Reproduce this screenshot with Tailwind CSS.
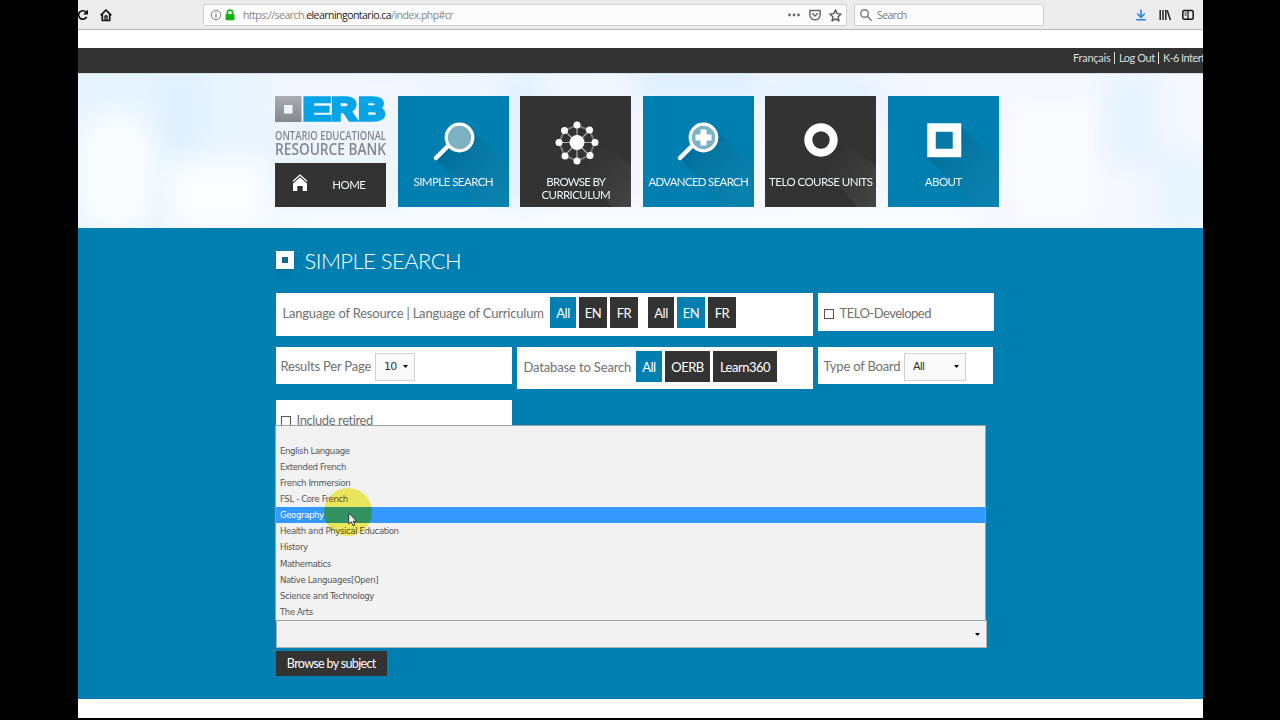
<!DOCTYPE html>
<html lang="en">
<head>
    <meta charset="UTF-8">
    <meta name="viewport" content="width=device-width, initial-scale=1.0">
    <title>Ontario Educational Resource Bank</title>
    <script src="https://cdn.jsdelivr.net/npm/@tailwindcss/browser@4"></script>
</head>
<body class="bg-black h-screen overflow-hidden">
    <div class="relative ml-[78px] w-[1125px] h-[718px] bg-white overflow-hidden whitespace-nowrap font-['Lato',sans-serif] flex flex-col">
        <!-- Browser toolbar -->
        <div class="h-[30px] shrink-0 bg-[#ececec] border-b border-[#b5b9b3] flex items-start pt-1 font-['Open_Sans',sans-serif] text-[10.5px]">
            <svg class="w-3 h-[22px] shrink-0" viewBox="0 0 12 22" fill="none" stroke="#111" stroke-width="1.7">
                <path d="M8 8.200A4.200 4.200 0 1 0 8.600 12.800"></path>
                <path d="M10 5.500v5H5z" fill="#111" stroke="none"></path>
            </svg>
            <svg class="w-3 h-[22px] ml-[10px] shrink-0" viewBox="0 0 12 22" fill="none" stroke="#111" stroke-width="1.7" stroke-linejoin="round">
                <path d="M.7 11.3L6 6l5.3 5.3M2.3 10.5v6h7.4v-6"></path>
                <path d="M5 16v-4h2v4" stroke-width="1.3"></path>
            </svg>
            <div class="ml-[91px] w-[644px] h-[22px] shrink-0 bg-[#fcfcfc] border border-[#cfcfcf] rounded-xs flex items-center text-[#858585]">
                <svg class="w-3 h-3 ml-[6px]" viewBox="0 0 12 12" fill="none" stroke="#777">
                    <circle cx="6" cy="6" r="4.7"></circle>
                    <path d="M6 5.2v3.6M6 3v1.2" stroke-width="1.2"></path>
                </svg>
                <svg class="w-[10px] h-3 ml-[3px]" viewBox="0 0 10 12">
                    <path d="M2.4 6V3.6a2.6 2.6 0 0 1 5.2 0V6" fill="none" stroke="#12b312" stroke-width="1.7"></path>
                    <rect x=".5" y="5" width="9" height="6.3" rx=".8" fill="#12b312"></rect>
                </svg>
                <span class="ml-[8px] mt-px tracking-[-0.53px]">https://search.<span class="text-[#222]">elearningontario.ca</span>/index.php#cr</span>
                <svg class="w-3 h-3 ml-auto" viewBox="0 0 12 12" fill="#666">
                    <circle cx="1.5" cy="6" r="1.4"></circle><circle cx="6" cy="6" r="1.4"></circle><circle cx="10.500" cy="6" r="1.4"></circle>
                </svg>
                <svg class="w-3 h-3 ml-[9px]" viewBox="0 0 12 12" fill="none" stroke="#666" stroke-width="1.4" stroke-linejoin="round" stroke-linecap="round">
                    <path d="M.8 1.5h10.4V6A5.2 4.8 0 0 1 .8 6zM3.5 4.6L6 7l2.5-2.4"></path>
                </svg>
                <svg class="w-[13px] h-[13px] ml-2 mr-[4px]" viewBox="0 0 12 12" fill="none" stroke="#555" stroke-width="1.3" stroke-linejoin="round">
                    <path d="M6 .9l1.5 3.4 3.7.4-2.8 2.5.8 3.8L6 9.1 2.8 11l.8-3.8L.8 4.7l3.7-.4z"></path>
                </svg>
            </div>
            <div class="ml-[7px] w-[190px] h-[22px] shrink-0 bg-[#fcfcfc] border border-[#cfcfcf] rounded-xs flex items-center text-[#777]">
                <svg class="w-3 h-3 ml-[5px]" viewBox="0 0 12 12" fill="none" stroke="#777" stroke-width="1.4">
                    <circle cx="4.5" cy="4.5" r="3.8"></circle><path d="M7.3 7.3L11.600 11.600"></path>
                </svg>
                <span class="ml-[5px] mt-px tracking-[-0.6px]">Search</span>
            </div>
            <svg class="w-3 h-[22px] ml-[91px] shrink-0" viewBox="0 0 12 22" fill="none" stroke="#2484dd" stroke-width="1.6">
                <path d="M6 5.500v7.500M2.200 9.500L6 13.300l3.800-3.800M1.200 15.700h9.600"></path>
            </svg>
            <svg class="w-3 h-[22px] ml-3 shrink-0" viewBox="0 0 12 22" fill="none" stroke="#222" stroke-width="1.500">
                <path d="M1.200 6v10M4 6v10M6.800 6v10M8.200 6.300L11.400 16"></path>
            </svg>
            <svg class="w-3 h-[22px] ml-[11px] shrink-0" viewBox="0 0 12 22" fill="none" stroke="#111" stroke-width="1.500">
                <rect x=".8" y="6.500" width="10.400" height="8.800" rx="1.600"></rect>
                <path d="M6 6.500v9" stroke-width="1.200"></path><path d="M2.600 9h2M2.600 11h2" stroke-width="1"></path>
            </svg>
        </div>

        <!-- Top links -->
        <div class="mt-[18px] h-[25px] shrink-0 bg-[#333] flex items-start pt-[2px] pl-[995px] text-[11px] leading-4 text-[#ddd]">
            <span class="w-[37px] shrink-0 tracking-[-0.25px]">Français</span>
            <span class="w-px h-3 shrink-0 bg-[#c5dccb] mx-[4px] mt-[2px]"></span>
            <span class="w-[35px] shrink-0 tracking-[-0.45px]">Log Out</span>
            <span class="w-px h-3 shrink-0 bg-[#efe8cf] mx-[4px] mt-[2px]"></span>
            <span class="tracking-[-0.55px]">K-6 Interface</span>
        </div>

        <!-- Header tiles -->
        <div class="h-[155px] shrink-0 bg-linear-to-r from-[#e6f4fe] via-[#f3f7ff] to-[#f5f8ff] border-t border-[#d5e0e6] relative">
            <svg class="absolute inset-0 w-full h-full" viewBox="0 0 1125 155" preserveAspectRatio="none">
                <defs>
                    <filter id="soft"><feGaussianBlur stdDeviation="13"></feGaussianBlur></filter>
                    <linearGradient id="shade" x1="0" y1="0" x2="1" y2="1"><stop offset=".2" stop-color="#005c85" stop-opacity=".5"></stop><stop offset=".85" stop-color="#2a85a8" stop-opacity=".25"></stop></linearGradient>
                    <linearGradient id="shadeDark" x1="0" y1="0" x2="1" y2="1"><stop offset=".3" stop-color="#333"></stop><stop offset="1" stop-color="#444"></stop></linearGradient>
                </defs>
                <g filter="url(#soft)">
                    <rect x="0" y="40" width="75" height="120" rx="30" fill="#fff" opacity=".8"></rect>
                    <rect x="82" y="0" width="40" height="90" fill="#d9edfe" opacity=".7"></rect>
                    <rect x="90" y="85" width="100" height="75" fill="#fff" opacity=".8"></rect>
                    <rect x="195" y="0" width="150" height="40" fill="#f5f6ff"></rect>
                    <rect x="430" y="0" width="30" height="150" fill="#d8edfe" opacity=".8"></rect>
                    <rect x="560" y="-5" width="120" height="30" fill="#d5eaff" opacity=".8"></rect>
                    <rect x="690" y="0" width="110" height="40" fill="#e4f1fe"></rect>
                    <rect x="200" y="135" width="700" height="30" fill="#fafdff"></rect>
                    <rect x="935" y="30" width="80" height="120" fill="#fff" opacity=".6"></rect>
                    <rect x="1030" y="0" width="50" height="90" fill="#e0f1fe" opacity=".7"></rect>
                    <rect x="1080" y="80" width="50" height="75" fill="#e7f4fe"></rect>
                </g>
            </svg>
            <div class="relative flex gap-[11.5px] pl-[197.3px] pt-[21.6px] text-[11.5px] leading-[13px] tracking-[-0.55px] text-center text-[#eef4f6]">
                <div class="w-[111px] h-[111px] shrink-0">
                    <svg class="w-[111px] h-[67px]" viewBox="0 0 111 67">
                        <defs>
                            <linearGradient id="grey" x1="0" y1="0" x2="0" y2="1"><stop offset="0" stop-color="#abadb5"></stop><stop offset="1" stop-color="#85878f"></stop></linearGradient>
                            <linearGradient id="sky" x1="0" y1="0" x2="0" y2="1"><stop offset="0" stop-color="#00aeef"></stop><stop offset="1" stop-color="#149cdd"></stop></linearGradient>
                        </defs>
                        <path d="M0 0h26.500v26H0zM9 9v8.500h8.500V9z" fill="url(#grey)" fill-rule="evenodd"></path>
                        <g fill="url(#sky)" stroke="#08a5e6" stroke-width="3.600" letter-spacing="0" font-family="Liberation Sans" font-weight="bold" font-size="32">
                            <text x="28" y="24.100" textLength="28" lengthAdjust="spacingAndGlyphs">E</text>
                            <text x="56.500" y="24.100" textLength="25" lengthAdjust="spacingAndGlyphs">R</text>
                            <text x="83.500" y="24.100" textLength="26.500" lengthAdjust="spacingAndGlyphs">B</text>
                        </g>
                        <g fill="#85878c" letter-spacing="0" font-family="Open Sans" font-weight="600">
                            <text x="0" y="43.500" font-size="12.500" textLength="111" lengthAdjust="spacingAndGlyphs">ONTARIO EDUCATIONAL</text>
                            <text x="0" y="58.500" font-size="17" textLength="111" lengthAdjust="spacingAndGlyphs">RESOURCE BANK</text>
                        </g>
                    </svg>
                    <div class="h-[44px] bg-[#333] flex items-center">
                        <svg class="w-4 h-[18px] ml-[17px] mb-[4px]" viewBox="0 0 16 18" fill="#fff">
                            <path d="M1 7.300L8 1l7 6.300" fill="none" stroke="#fff" stroke-width="1.200"></path>
                            <path d="M1 9.500L8 3.300l7 6.200v7.500h-4.300v-5h-5.400v5H1z"></path>
                        </svg>
                        <span class="ml-[24px]">HOME</span>
                    </div>
                </div>
                <div class="w-[111px] h-[111px] shrink-0 bg-[#007fb0]">
                    <svg class="w-[111px] h-[79px] overflow-visible" viewBox="0 0 111 79">
                        <path d="M36 62L72 33l39 37v41H84z" fill="url(#shade)"></path>
                        <path d="M38 62L50 50" stroke="#fff" stroke-width="4.500" stroke-linecap="round"></path>
                        <circle cx="61.500" cy="41.500" r="13.300" fill="#7db2c4" stroke="#fff" stroke-width="3.200"></circle>
                    </svg>
                    <div class="relative">SIMPLE SEARCH</div>
                </div>
                <div class="w-[111px] h-[111px] shrink-0 bg-[#333]">
                    <svg class="w-[111px] h-[79px] overflow-visible" viewBox="0 0 111 79" fill="#fff">
                        <path d="M44 60L78 48l33 20v43H92z" fill="url(#shadeDark)"></path>
                        <g stroke="#aaa" stroke-width="1.200" fill="none">
                            <path d="M57 29v36M39 46.500h36M44.500 34.500l25 25M69.500 34.500l-25 25"></path>
                            <path d="M57 29l12.500 5.500L75 46.500l-5.500 13L57 65l-12.500-5.500-5.500-13 5.500-12z" stroke="#777" stroke-width="2"></path>
                        </g>
                        <circle cx="57" cy="46.500" r="7.500"></circle>
                        <circle cx="57" cy="29" r="3.500"></circle><circle cx="69.500" cy="34" r="3.500"></circle>
                        <circle cx="75" cy="46.500" r="3.500"></circle><circle cx="70" cy="59.500" r="3.500"></circle>
                        <circle cx="57" cy="65" r="3.500"></circle><circle cx="45" cy="60" r="3.500"></circle>
                        <circle cx="39" cy="46.500" r="3.500"></circle><circle cx="44.500" cy="34.500" r="3.500"></circle>
                    </svg>
                    <div class="relative tracking-[-0.75px]">BROWSE BY<br><span class="tracking-[-0.6px]">CURRICULUM</span></div>
                </div>
                <div class="w-[111px] h-[111px] shrink-0 bg-[#007fb0]">
                    <svg class="w-[111px] h-[79px] overflow-visible" viewBox="0 0 111 79">
                        <path d="M36 62L72 33l39 37v41H84z" fill="url(#shade)"></path>
                        <path d="M37 62L49 50" stroke="#fff" stroke-width="4.500" stroke-linecap="round"></path>
                        <circle cx="60.500" cy="41.500" r="13.300" fill="#7db2c4" stroke="#fff" stroke-width="3.200"></circle>
                        <path d="M60.500 33.500v16M52.500 41.500h16" stroke="#fff" stroke-width="6"></path>
                    </svg>
                    <div class="relative tracking-[-0.7px]">ADVANCED SEARCH</div>
                </div>
                <div class="w-[111px] h-[111px] shrink-0 bg-[#333]">
                    <svg class="w-[111px] h-[79px] overflow-visible" viewBox="0 0 111 79">
                        <path d="M48 58L72 40l39 30v41H92z" fill="url(#shadeDark)"></path>
                        <circle cx="56" cy="44" r="12.700" fill="#333" stroke="#fff" stroke-width="8"></circle>
                    </svg>
                    <div class="relative">TELO COURSE UNITS</div>
                </div>
                <div class="w-[111px] h-[111px] shrink-0 bg-[#007fb0]">
                    <svg class="w-[111px] h-[79px] overflow-visible" viewBox="0 0 111 79">
                        <path d="M39 61L73 30l38 38v43H87z" fill="url(#shade)"></path>
                        <rect x="43.500" y="31.500" width="25.500" height="25.500" fill="#0679a6" stroke="#fff" stroke-width="8.500"></rect>
                    </svg>
                    <div class="relative">ABOUT</div>
                </div>
            </div>
        </div>

        <!-- Search form -->
        <div class="relative h-[471px] shrink-0 bg-[#007fb0] pl-[197.500px] text-[13px] tracking-[-0.2px] text-[#707070]">
            <div class="flex items-center pt-[17px] h-[65px] pb-[16px] text-white">
                <div class="w-[18px] h-[18px] bg-white flex items-center justify-center shadow-md mb-[2px]">
                    <div class="w-[6px] h-[6px] bg-[#17668b]"></div>
                </div>
                <h1 class="ml-[11px] mb-px text-[22px] tracking-[-0.550px] font-light">SIMPLE SEARCH</h1>
            </div>
            <div class="flex items-start gap-[5px]">
                <div class="w-[537px] h-[43px] bg-white flex pt-[4px] pl-[7px]">
                    <span class="w-[267.500px] leading-[32px]">Language of Resource | Language of Curriculum</span>
                    <div class="flex gap-[3px] h-[31px] leading-[33px] text-center text-white tracking-[-0.4px]">
                        <span class="w-[26px] bg-[#007fb0]">All</span>
                        <span class="w-[28px] bg-[#333]">EN</span>
                        <span class="w-[28px] bg-[#333]">FR</span>
                        <span class="w-[26px] bg-[#333] ml-[7px]">All</span>
                        <span class="w-[28px] bg-[#007fb0]">EN</span>
                        <span class="w-[28px] bg-[#333]">FR</span>
                    </div>
                </div>
                <div class="w-[176px] h-[38px] bg-white flex items-center pl-[6px] pt-[3px]">
                    <span class="w-[10px] h-[10px] border border-[#555]"></span>
                    <span class="ml-[6px] tracking-[-0.5px]">TELO-Developed</span>
                </div>
            </div>
            <div class="flex items-start gap-[5px] mt-[11px]">
                <div class="w-[236px] h-[37px] bg-white flex items-center pt-[2px] pl-[5px]">
                    <span class="w-[94.500px]">Results Per Page</span>
                    <div class="w-10 h-7 bg-[#f9f9f9] border border-[#d0d0d0] flex items-center pl-[8px] text-[11px] text-[#333] font-['DejaVu_Sans',sans-serif]">
                        <span class="mt-[2px] tracking-[-0.8px]">10</span>
                        <svg class="w-[5px] h-[3px] ml-auto mr-[6px]" viewBox="0 0 5 3"><path d="M0 0h5L2.500 3z"></path></svg>
                    </div>
                </div>
                <div class="w-[296px] h-[42px] bg-white flex pt-[3.500px] pl-[7px]">
                    <span class="w-[112.500px] leading-[32px] tracking-[-0.15px]">Database to Search</span>
                    <div class="flex gap-[3px] h-[31px] leading-[33px] text-center text-white tracking-[-0.5px]">
                        <span class="w-[26px] bg-[#007fb0]">All</span>
                        <span class="w-[45px] bg-[#333]">OERB</span>
                        <span class="w-[64px] bg-[#333]">Learn360</span>
                    </div>
                </div>
                <div class="w-[175.500px] h-[37px] bg-white flex items-center pt-[2px] pl-[6px]">
                    <span class="w-[80.500px]">Type of Board</span>
                    <div class="w-[62px] h-7 bg-[#f9f9f9] border border-[#d0d0d0] flex items-center pl-[8px] text-[11px] text-[#333] font-['DejaVu_Sans',sans-serif]">
                        <span class="mt-[2px] tracking-[-0.8px]">All</span>
                        <svg class="w-[5px] h-[3px] ml-auto mr-[6px]" viewBox="0 0 5 3"><path d="M0 0h5L2.500 3z"></path></svg>
                    </div>
                </div>
            </div>
            <div class="mt-[11px] w-[236px] h-[38px] bg-white flex items-center pl-[5px] pt-[3px]">
                <span class="w-[10px] h-[10px] border border-[#555]"></span>
                <span class="ml-[6px] tracking-[-0.4px]">Include retired</span>
            </div>
            <div class="mt-[182px] w-[711px] h-[28px] bg-[#f2f2f2] border border-[#a9b3b6] flex items-center justify-end pr-[6px]">
                <svg class="w-[5px] h-[3px]" viewBox="0 0 5 3"><path d="M0 0h5L2.500 3z"></path></svg>
            </div>
            <div class="mt-[3px] w-[111.500px] h-[25px] leading-[25px] bg-[#333] text-white text-center text-[12.500px] tracking-[-0.65px]">Browse by subject</div>

            <!-- Open subject list -->
            <div class="absolute left-[197px] top-[197px] w-[711px] h-[196px] bg-[#f2f2f2] border border-[#9aa2a6] text-[9.500px] leading-[16.150px] tracking-[-0.38px] text-[#555] font-['DejaVu_Sans_Condensed','DejaVu_Sans',sans-serif]">
                <ul class="pt-[16.500px]">
                    <li class="pl-1">English Language</li>
                    <li class="pl-1">Extended French</li>
                    <li class="pl-1">French Immersion</li>
                    <li class="pl-1">FSL - Core French</li>
                    <li class="pl-1 bg-[#3399ff] text-white">Geography</li>
                    <li class="pl-1">Health and Physical Education</li>
                    <li class="pl-1">History</li>
                    <li class="pl-1">Mathematics</li>
                    <li class="pl-1">Native Languages[Open]</li>
                    <li class="pl-1">Science and Technology</li>
                    <li class="pl-1">The Arts</li>
                </ul>
            </div>
        </div>

        <!-- Pointer with click highlight -->
        <div class="absolute left-[246px] top-[488px] w-12 h-12 rounded-full bg-[#f4f03a] mix-blend-multiply opacity-80"></div>
        <svg class="absolute left-[270px] top-[512px] w-[10px] h-[15px]" viewBox="0 0 10 15" fill="#fff" stroke="#222" stroke-width=".9">
            <path d="M.8 1v11l2.500-2.200 1.700 4 1.800-.8-1.700-3.800h3.500z"></path>
        </svg>
    </div>
</body>
</html>
